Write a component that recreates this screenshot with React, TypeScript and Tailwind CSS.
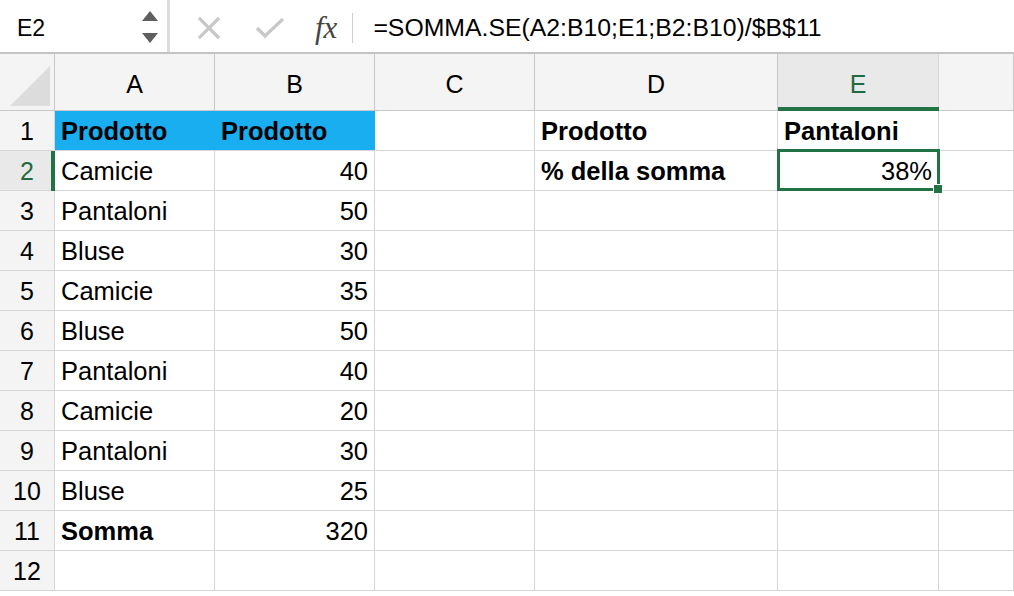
import React from "react";

const cols = ["A", "B", "C", "D", "E", "F"];

type Cell = { t?: string; bold?: boolean; right?: boolean; blue?: boolean };

const data: Record<number, Cell[]> = {
  1: [
    { t: "Prodotto", bold: true, blue: true },
    { t: "Prodotto", bold: true, blue: true },
    {},
    { t: "Prodotto", bold: true },
    { t: "Pantaloni", bold: true },
    {},
  ],
  2: [{ t: "Camicie" }, { t: "40", right: true }, {}, { t: "% della somma", bold: true }, { t: "38%", right: true }, {}],
  3: [{ t: "Pantaloni" }, { t: "50", right: true }],
  4: [{ t: "Bluse" }, { t: "30", right: true }],
  5: [{ t: "Camicie" }, { t: "35", right: true }],
  6: [{ t: "Bluse" }, { t: "50", right: true }],
  7: [{ t: "Pantaloni" }, { t: "40", right: true }],
  8: [{ t: "Camicie" }, { t: "20", right: true }],
  9: [{ t: "Pantaloni" }, { t: "30", right: true }],
  10: [{ t: "Bluse" }, { t: "25", right: true }],
  11: [{ t: "Somma", bold: true }, { t: "320", right: true }],
  12: [],
};

const font = { fontFamily: '"Liberation Sans", Arial, sans-serif' };

export default function App() {
  const rows = Array.from({ length: 12 }, (_, i) => i + 1);
  return (
    <div className="w-[1014px] h-[596px] overflow-hidden bg-white text-black" style={font}>
      {/* Formula bar */}
      <div className="flex h-[54px] items-center border-b-2 border-[#c4c4c4]">
        <div className="flex h-full w-[167px] items-center justify-between pl-[17px] pr-[9px]">
          <span className="pt-[5px] text-[23px]">E2</span>
          <div className="flex flex-col items-center gap-[12px] pt-[2px]">
            <svg width="16" height="10" viewBox="0 0 16 10">
              <polygon points="8,0 16,10 0,10" fill="#5f5f5f" />
            </svg>
            <svg width="16" height="10" viewBox="0 0 16 10">
              <polygon points="0,0 16,0 8,10" fill="#5f5f5f" />
            </svg>
          </div>
        </div>
        <div className="h-full w-[3px] bg-[#dcdcdc]" />
        <div className="flex h-full items-center pt-[4px]">
          <svg className="ml-[27px]" width="24" height="24" viewBox="0 0 24 24">
            <path d="M3 3 L21 21 M21 3 L3 21" stroke="#c8c8c8" strokeWidth="3.2" strokeLinecap="square" />
          </svg>
          <svg className="ml-[34px]" width="30" height="24" viewBox="0 0 30 24">
            <path d="M2 12 L10 20 L28 3" stroke="#c8c8c8" strokeWidth="3.2" fill="none" />
          </svg>
          <span
            className="ml-[30px] text-[31px] italic text-[#444]"
            style={{ fontFamily: '"Liberation Serif", "Times New Roman", serif' }}
          >
            fx
          </span>
          <div className="ml-[15px] h-[30px] w-px bg-[#cfcfcf]" />
          <span className="ml-[20px] text-[24.8px]">=SOMMA.SE(A2:B10;E1;B2:B10)/$B$11</span>
        </div>
      </div>

      {/* Grid */}
      <div className="grid grid-cols-[55px_160px_160px_160px_243px_161px_1fr]">
        {/* header row */}
        <div className="relative h-[57px] border-r border-b border-[#c8c8c8] bg-[#f4f4f4]">
          <svg className="absolute left-[10px] top-[12px]" width="40" height="40" viewBox="0 0 40 40">
            <polygon points="40,0 40,40 0,40" fill="#dcdcdc" />
          </svg>
        </div>
        {cols.map((c) => (
          <div
            key={c}
            className={
              c === "E"
                ? "relative flex h-[57px] items-center justify-center border-r border-b border-[#d6d6d6] bg-[#e9e9e9] pt-[6px] text-[25px] text-[#1f6b43]"
                : "relative flex h-[57px] items-center justify-center border-r border-b border-[#c8c8c8] bg-[#f4f4f4] pt-[6px] text-[25px]"
            }
          >
            {c === "F" ? "" : c}
            {c === "E" && <div className="absolute bottom-[-1px] left-0 right-[-1px] h-[4px] bg-[#217346]" />}
          </div>
        ))}

        {rows.map((r) => {
          const cells = data[r] || [];
          return (
            <React.Fragment key={r}>
              <div
                className={
                  r === 2
                    ? "relative flex h-[40px] items-center justify-center border-r border-b border-[#d6d6d6] bg-[#e9e9e9] pt-[3px] text-[25px] text-[#1f6b43]"
                    : "flex h-[40px] items-center justify-center border-r border-b border-[#d6d6d6] bg-[#f4f4f4] pt-[3px] text-[25px]"
                }
              >
                {r}
                {r === 2 && <div className="absolute right-[-1px] top-0 bottom-[-1px] w-[4px] bg-[#217346]" />}
              </div>
              {cols.map((c, ci) => {
                const cell = cells[ci] || {};
                const sel = r === 2 && c === "E";
                return (
                  <div
                    key={c}
                    className={[
                      "relative flex h-[40px] items-center border-b border-[#d6d6d6] px-[6px] pt-[3px] leading-none whitespace-nowrap",
                      cell.blue ? "bg-[#18aef0] border-r-0" : "border-r",
                      cell.right ? "justify-end" : "justify-start",
                      cell.bold ? "font-bold text-[25.5px]" : "text-[25.5px]",
                      sel ? "z-10" : "",
                    ].join(" ")}
                  >
                    {cell.t}
                    {sel && (
                      <>
                        <div className="pointer-events-none absolute top-[-2px] left-[-1px] right-[-2px] bottom-[-1px] border-[3px] border-[#217346]" />
                        <div className="absolute right-[-5px] bottom-[-4px] h-[10px] w-[10px] border border-white bg-[#217346]" />
                      </>
                    )}
                  </div>
                );
              })}
            </React.Fragment>
          );
        })}
      </div>
    </div>
  );
}
